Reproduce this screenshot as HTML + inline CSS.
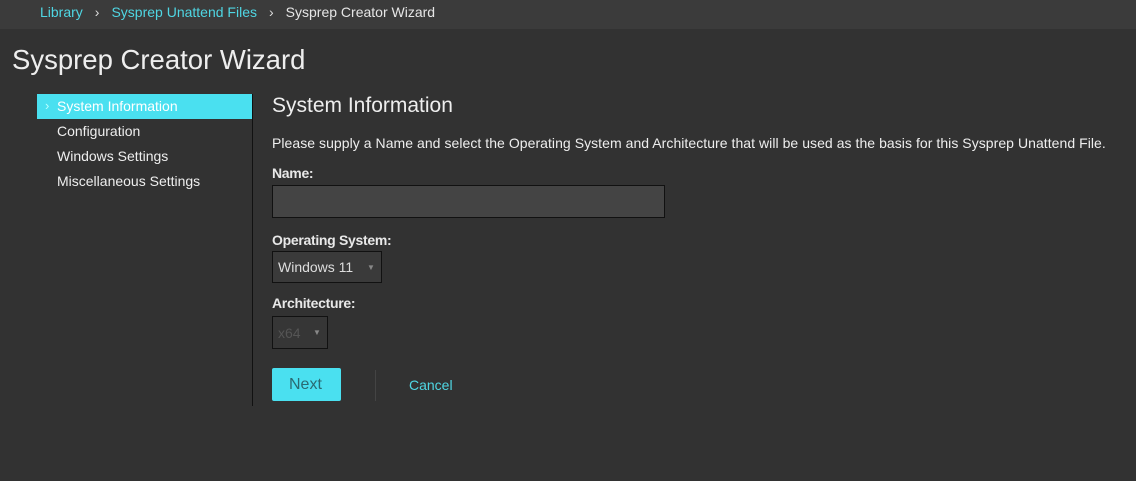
<!DOCTYPE html>
<html><head><style>
*{margin:0;padding:0;box-sizing:border-box}
body{width:1136px;height:481px;background:#323232;font-family:"Liberation Sans",sans-serif;color:#eee;position:relative;overflow:hidden}
.a{position:absolute;white-space:nowrap}
.top{position:absolute;left:0;top:0;width:1136px;height:29px;background:#3b3b3b}
.cy{color:#4fd6e3}
.lbl{font-weight:bold;font-size:14px;color:#e8e8e8;letter-spacing:-0.3px}
.box{position:absolute;border:1px solid #111;background:#3a3a3a}
</style></head><body>
<div class="top"></div>
<div class="a" style="left:40px;top:4px;font-size:14px"><span class="cy">Library</span><span style="color:#ddd;margin:0 12px">›</span><span class="cy">Sysprep Unattend Files</span><span style="color:#ddd;margin:0 12px">›</span><span style="color:#e6e6e6">Sysprep Creator Wizard</span></div>
<div class="a" style="left:12px;top:44px;font-size:27.5px;color:#eee">Sysprep Creator Wizard</div>
<div class="a" style="left:37px;top:94px;width:215px;height:25px;background:#4ae0f0"></div>
<div class="a" style="left:45px;top:98px;font-size:13px;color:#bff">›</div>
<div class="a" style="left:57px;top:98px;font-size:14px;color:#fff">System Information</div>
<div class="a" style="left:57px;top:123px;font-size:14px;color:#eee">Configuration</div>
<div class="a" style="left:57px;top:148px;font-size:14px;color:#eee">Windows Settings</div>
<div class="a" style="left:57px;top:173px;font-size:14px;color:#eee">Miscellaneous Settings</div>
<div class="a" style="left:252px;top:94px;width:1px;height:312px;background:#111"></div>
<div class="a" style="left:272px;top:94px;font-size:21px;color:#eee">System Information</div>
<div class="a" style="left:272px;top:135px;font-size:14px;letter-spacing:0.05px;color:#eee">Please supply a Name and select the Operating System and Architecture that will be used as the basis for this Sysprep Unattend File.</div>
<div class="a lbl" style="left:272px;top:165px">Name:</div>
<div class="box" style="left:272px;top:185px;width:393px;height:33px;background:#444"></div>
<div class="a lbl" style="left:272px;top:232px">Operating System:</div>
<div class="box" style="left:272px;top:251px;width:110px;height:32px"></div>
<div class="a" style="left:278px;top:259px;font-size:14px;color:#ddd">Windows 11</div>
<div class="a" style="left:367px;top:263px;font-size:8px;color:#888">▼</div>
<div class="a lbl" style="left:272px;top:295px">Architecture:</div>
<div class="box" style="left:272px;top:316px;width:56px;height:33px;background:#363636"></div>
<div class="a" style="left:278px;top:325px;font-size:14px;color:#555">x64</div>
<div class="a" style="left:313px;top:328px;font-size:8px;color:#888">▼</div>
<div class="a" style="left:272px;top:368px;width:69px;height:33px;background:#4ae0f0;border-radius:2px"></div>
<div class="a" style="left:289px;top:376px;font-size:16px;color:#2a6a72">Next</div>
<div class="a" style="left:375px;top:370px;width:1px;height:31px;background:#444"></div>
<div class="a cy" style="left:409px;top:377px;font-size:14px">Cancel</div>
</body></html>
